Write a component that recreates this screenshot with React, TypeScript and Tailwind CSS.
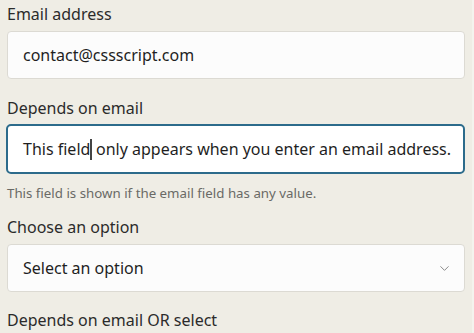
import { ChevronDown } from "lucide-react";

const font = { fontFamily: '"Noto Sans", "Open Sans", sans-serif' };

function Label({ children }: { children: React.ReactNode }) {
  return <label className="block text-[16px] leading-[24px] text-[#2b2b2b]">{children}</label>;
}

export default function App() {
  return (
    <div className="w-[474px] h-[333px] overflow-hidden bg-[#efede5] flex" style={font}>
      <div className="flex-1 min-w-0 pl-[7px] pr-[7px] pt-[2px]">
        <Label>Email address</Label>
        <div className="mt-[5px] h-[48px] rounded-[4px] border border-[#dcdad3] bg-[#fcfcfc] flex items-center px-[15px] text-[16px] text-[#1f1f1f]">
          contact@cssscript.com
        </div>

        <div className="mt-[17px]">
          <Label>Depends on email</Label>
        </div>
        <div className="mt-[4px] -ml-px h-[50px] rounded-[5px] border-2 border-[#2c6b8b] bg-white flex items-center px-[15px] text-[16px] text-[#1f1f1f] whitespace-nowrap overflow-hidden">
          <span>This field</span>
          <span className="block shrink-0 w-[1.5px] h-[21px] bg-[#444]"></span>
          <span>&nbsp;only appears when you enter an email address.</span>
        </div>
        <p className="mt-[9px] text-[13.3px] leading-[20px] text-[#6a6a66]">
          This field is shown if the email field has any value.
        </p>

        <div className="mt-[12px]">
          <Label>Choose an option</Label>
        </div>
        <div className="mt-[5px] h-[48px] rounded-[4px] border border-[#dcdad3] bg-[#fcfcfc] flex items-center justify-between pl-[15px] pr-[12px] text-[16px] text-[#1f1f1f]">
          <span>Select an option</span>
          <ChevronDown className="w-[15px] h-[15px] text-[#8a8a8a]" strokeWidth={1.6} />
        </div>

        <div className="mt-[16px]">
          <Label>Depends on email OR select</Label>
        </div>
      </div>
      <div className="w-[2px] bg-[#f4f3ee]"></div>
    </div>
  );
}
